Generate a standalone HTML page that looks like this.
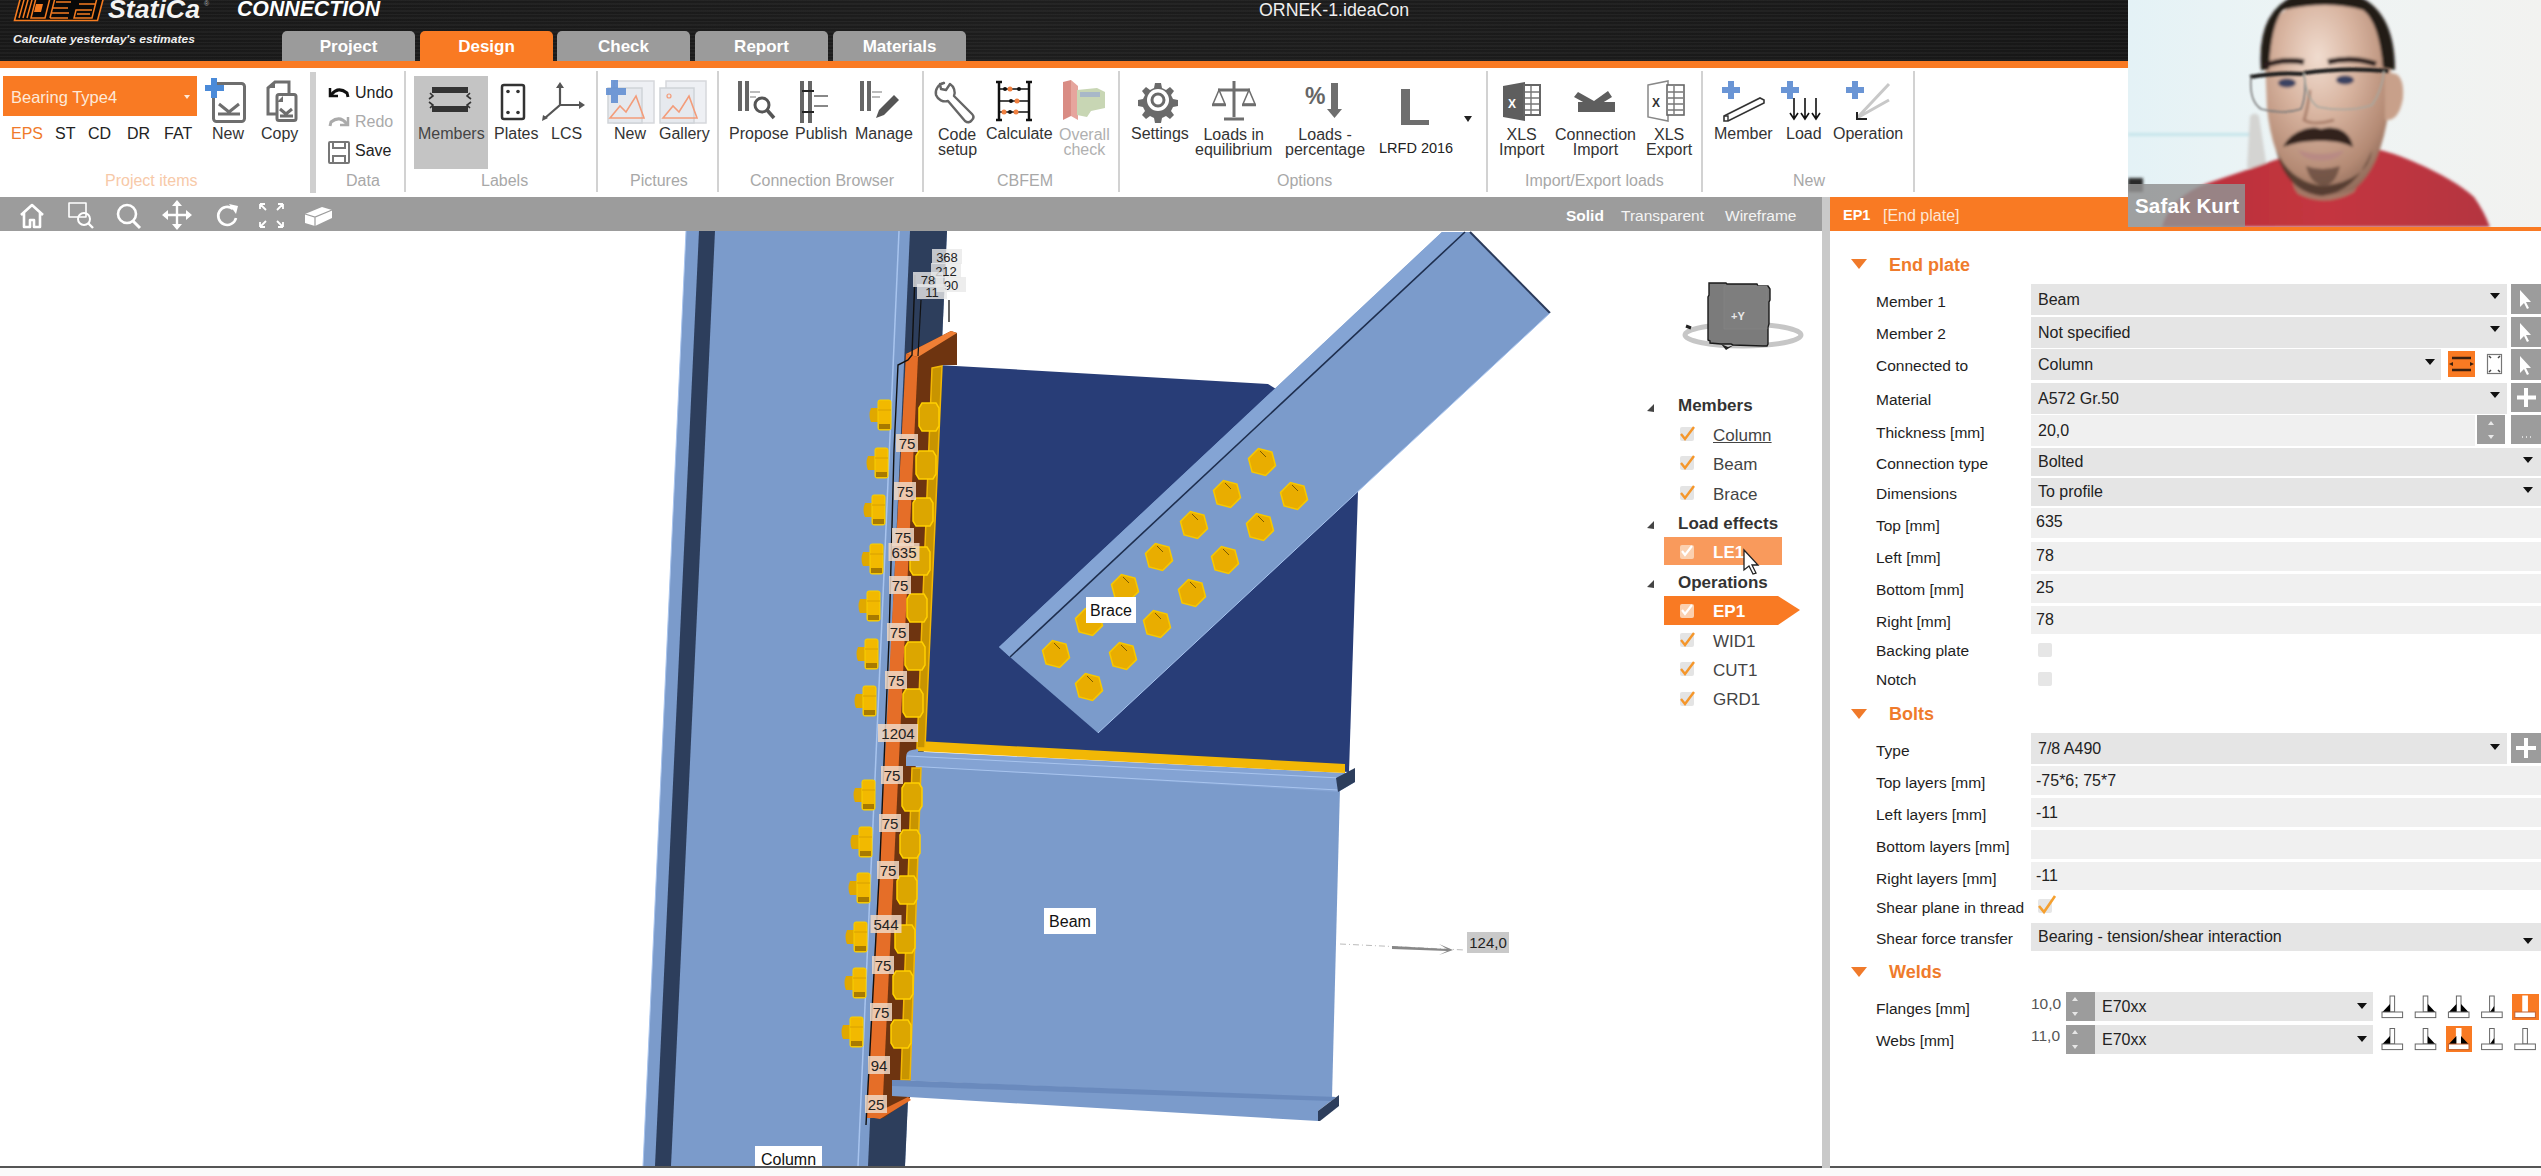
<!DOCTYPE html>
<html><head><meta charset="utf-8">
<style>
*{margin:0;padding:0;box-sizing:border-box}
html,body{width:2541px;height:1176px;overflow:hidden;background:#fff;font-family:"Liberation Sans",sans-serif;position:relative}
.a{position:absolute;white-space:nowrap}
#hdr{left:0;top:0;width:2541px;height:61px;background:repeating-linear-gradient(180deg,rgba(60,60,60,.35) 0px,rgba(0,0,0,0) 1px,rgba(0,0,0,.25) 2px,rgba(0,0,0,0) 3px,rgba(70,70,70,.2) 4px,rgba(0,0,0,.3) 6px,rgba(0,0,0,0) 7px),linear-gradient(90deg,#1c1c1c,#222 40%,#1e1e1e 70%,#141414)}
#ostripe{left:0;top:61px;width:2541px;height:7px;background:#f97a23}
.tab{top:31px;height:30px;width:133px;border-radius:5px 5px 0 0;background:#9b9b9b;color:#fff;font-weight:bold;font-size:17px;text-align:center;line-height:31px}
.tab.on{background:#f97a23}
#ribbon{left:0;top:68px;width:2541px;height:129px;background:#fff}
.sep{top:71px;width:2px;height:121px;background:#d2d2d2}
.lbl{font-size:17px;color:#333;text-align:center}
.grp{font-size:16px;color:#a8a8a8;top:172px}
#tbar{left:0;top:197px;width:1822px;height:34px;background:#9c9c9c}
#vsep{left:1822px;top:197px;width:8px;height:979px;background:#c9c9c9}
#phdr{left:1830px;top:197px;width:711px;height:34px;background:#f97a23}
.pl{font-size:15.5px;color:#1e1e1e;left:1876px;margin-top:1.5px}
.fld{left:2031px;height:31px;background:#e5e5e5;font-size:16px;color:#222;padding-left:7px;line-height:31px}
.sec{font-size:18px;font-weight:bold;color:#ef7b2c;left:1889px}
.tri{width:0;height:0;border-left:8px solid transparent;border-right:8px solid transparent;border-top:10px solid #f07a2a;left:1851px}
</style></head><body>
<div class="a" id="hdr"></div>
<div class="a" id="ostripe"></div>
<div class="a" id="ribbon"></div>
<div class="a tab" style="left:282px">Project</div>
<div class="a tab on" style="left:420px">Design</div>
<div class="a tab" style="left:557px">Check</div>
<div class="a tab" style="left:695px">Report</div>
<div class="a tab" style="left:833px">Materials</div>
<div class="a" style="left:1259px;top:-0.5px;font-size:17.8px;color:#eeeeee">ORNEK-1.ideaCon</div>
<div class="a" id="tbar"></div>
<div class="a" id="vsep"></div>
<div class="a" id="phdr"></div>
<!-- logo -->
<svg class="a" style="left:0;top:0" width="420" height="60">
 <path d="M14.5 20.5 L97.5 20.5 L104 -4 L21 -4 Z" fill="#080808" stroke="#f47b20" stroke-width="1.6"/>
 <g fill="none" stroke="#f47b20" stroke-width="1.5">
  <path d="M19 18 L24.5 -2 M23 18 L28.5 -2"/>
  <path d="M27 18 L32.5 -2 M31 18 L36 -2 L50 -2 L45 18 Z"/>
  <path d="M50 18 L55 -2 L72 -2 M50 18 L68 18 M53 8 L68 8 M56 2 L71 2 M52 13 L69 13"/>
  <path d="M77 -2 L97 -2 L92 18 L74 18 L76 10 L92 10 M79 4 L95 4 M77 14 L90 14"/>
 </g>
 <path d="M36 4 L43 4 L41 12 L34 12 Z" fill="#f47b20"/>
 <text x="108" y="18" font-family="Liberation Sans" font-weight="bold" font-style="italic" font-size="26" fill="#f4f4f4" textLength="92" lengthAdjust="spacingAndGlyphs">StatiCa</text>
 <text x="204" y="6" font-family="Liberation Sans" font-size="7" fill="#aaa">®</text>
 <text x="237" y="16" font-family="Liberation Sans" font-weight="bold" font-style="italic" font-size="22" fill="#fff" textLength="143" lengthAdjust="spacingAndGlyphs">CONNECTION</text>
 <text x="13" y="42.5" font-family="Liberation Sans" font-weight="bold" font-style="italic" font-size="11" fill="#eee" textLength="182" lengthAdjust="spacingAndGlyphs">Calculate yesterday's estimates</text>
</svg>
<!-- dropdown -->
<div class="a" style="left:3px;top:76px;width:194px;height:40px;background:#f97a23"></div>
<div class="a" style="left:11px;top:88px;font-size:16.5px;color:#fde9d8">Bearing Type4</div>
<div class="a" style="left:184px;top:95px;width:0;height:0;border-left:3px solid transparent;border-right:3px solid transparent;border-top:4px solid #fde9d8"></div>
<div class="a" style="left:11px;top:125px;font-size:16px;color:#f07a2a">EPS</div>
<div class="a" style="left:55px;top:125px;font-size:16px;color:#222">ST</div>
<div class="a" style="left:88px;top:125px;font-size:16px;color:#222">CD</div>
<div class="a" style="left:127px;top:125px;font-size:16px;color:#222">DR</div>
<div class="a" style="left:164px;top:125px;font-size:16px;color:#222">FAT</div>
<!-- New / Copy icons -->
<svg class="a" style="left:205px;top:78px" width="95" height="46">
 <rect x="8.5" y="5.5" width="31" height="38" rx="3" fill="none" stroke="#6e6e6e" stroke-width="3"/>
 <path d="M14 26 l10 8 l10 -8 M13 36 h22" stroke="#6e6e6e" stroke-width="3" fill="none"/>
 <path d="M6 0 h6 v7 h7 v6 h-7 v7 h-6 v-7 h-7 v-6 h7z" fill="#4a8ad8"/>
 <path d="M63 22 v-12 l7 -6 h14 v12 M63 22 v14 h9" fill="none" stroke="#6e6e6e" stroke-width="3"/>
 <path d="M63 10 l7 -6 v6z" fill="#6e6e6e"/>
 <rect x="72" y="16.5" width="19" height="26" rx="2" fill="#fff" stroke="#6e6e6e" stroke-width="3"/>
 <path d="M72 24 l6 -6 v6z" fill="#6e6e6e"/>
 <path d="M75 31 l6 5 l6 -5 M75 38 h13" stroke="#6e6e6e" stroke-width="3" fill="none"/>
</svg>
<div class="a" style="left:212px;top:125px;font-size:16px;color:#333">New</div>
<div class="a" style="left:261px;top:125px;font-size:16px;color:#333">Copy</div>
<div class="a grp" style="left:105px;color:#f7c9a8">Project items</div>
<div class="a" style="left:310px;top:72px;width:6px;height:121px;background:#cfcfcf"></div>
<!-- Data -->
<svg class="a" style="left:326px;top:84px" width="26" height="82">
 <path d="M4 4 v8 h8" fill="none" stroke="#111" stroke-width="2.5"/>
 <path d="M5 11 q7 -9 16 -2 l1 4" fill="none" stroke="#111" stroke-width="3"/>
 <path d="M22 33 v8 h-8" fill="none" stroke="#aaa" stroke-width="2.5"/>
 <path d="M21 40 q-7 -9 -16 -2 l-1 4" fill="none" stroke="#aaa" stroke-width="3"/>
 <rect x="3" y="58" width="20" height="21" rx="1" fill="none" stroke="#777" stroke-width="2"/>
 <path d="M7 58 v6 h12 v-6 M7 79 v-7 h12 v7" fill="none" stroke="#777" stroke-width="2"/>
</svg>
<div class="a" style="left:355px;top:84px;font-size:16px;color:#222">Undo</div>
<div class="a" style="left:355px;top:113px;font-size:16px;color:#aaa">Redo</div>
<div class="a" style="left:355px;top:142px;font-size:16px;color:#222">Save</div>
<div class="a grp" style="left:346px">Data</div>
<div class="a sep" style="left:404px"></div>
<!-- Labels -->
<div class="a" style="left:414px;top:76px;width:74px;height:93px;background:#c4c4c4"></div>
<svg class="a" style="left:425px;top:82px" width="160" height="40">
 <rect x="7" y="5" width="36" height="6" fill="#333"/><rect x="7" y="24" width="36" height="6" fill="#333"/>
 <path d="M4 17 l4 -3 l-3 -3 M46 17 l-4 -3 l3 -3 M4 20 l4 3 l-3 3 M46 20 l-4 3 l3 3" stroke="#333" stroke-width="1.6" fill="none"/>
 <rect x="77" y="3" width="22" height="34" rx="2" fill="none" stroke="#333" stroke-width="2.5"/>
 <circle cx="83" cy="9.5" r="1.8" fill="#333"/><circle cx="93" cy="9.5" r="1.8" fill="#333"/><circle cx="83" cy="30.5" r="1.8" fill="#333"/><circle cx="93" cy="30.5" r="1.8" fill="#333"/>
 <path d="M135 3 v20 l-15 13 M135 23 h20" stroke="#555" stroke-width="2.2" fill="none"/>
 <path d="M131 6 l4 -6 l4 6z M154 19 l6 4 l-6 4z M117 39 l1 -6 l5 3z" fill="#555"/>
</svg>
<div class="a" style="left:418px;top:125px;font-size:16px;color:#444">Members</div>
<div class="a" style="left:494px;top:125px;font-size:16px;color:#333">Plates</div>
<div class="a" style="left:551px;top:125px;font-size:16px;color:#333">LCS</div>
<div class="a grp" style="left:481px">Labels</div>
<div class="a sep" style="left:596px"></div>
<!-- Pictures -->
<svg class="a" style="left:606px;top:80px" width="110" height="45">
 <rect x="8" y="1" width="40" height="42" fill="#eef0f4" stroke="#d6d8dc" stroke-width="1.5"/>
 <rect x="2" y="8" width="34" height="35" fill="#e6e9ee" stroke="#cfd3d8" stroke-width="1.5"/>
 <path d="M4 38 l10 -12 l6 6 l10 -16 l8 22z" fill="none" stroke="#f39c7a" stroke-width="1.6"/>
 <path d="M5 0 h7 v8 h8 v7 h-8 v8 h-7 v-8 h-8 v-7 h8z" fill="#5a8ad0" opacity=".85"/>
 <rect x="60" y="1" width="40" height="42" fill="#eef0f4" stroke="#d6d8dc" stroke-width="1.5"/>
 <rect x="54" y="8" width="34" height="35" fill="#e6e9ee" stroke="#cfd3d8" stroke-width="1.5"/>
 <path d="M57 38 l10 -12 l6 6 l10 -16 l8 22z" fill="none" stroke="#f39c7a" stroke-width="1.6"/>
 <circle cx="63" cy="16" r="2" fill="none" stroke="#f39c7a" stroke-width="1.2"/>
</svg>
<div class="a" style="left:614px;top:125px;font-size:16px;color:#333">New</div>
<div class="a" style="left:659px;top:125px;font-size:16px;color:#333">Gallery</div>
<div class="a grp" style="left:630px">Pictures</div>
<div class="a sep" style="left:717px"></div>
<!-- Connection Browser -->
<svg class="a" style="left:733px;top:80px" width="185" height="45">
 <rect x="5" y="1" width="4" height="30" fill="#666"/><rect x="12" y="1" width="4" height="30" fill="#666"/>
 <path d="M17 12 h10 M17 17 h6" stroke="#bbb" stroke-width="2"/>
 <circle cx="29" cy="25" r="7" fill="none" stroke="#555" stroke-width="3"/><path d="M34 30 l7 8" stroke="#555" stroke-width="3.5"/>
 <rect x="67" y="1" width="4" height="42" fill="#666"/><rect x="75" y="1" width="4" height="42" fill="#666"/>
 <path d="M69 11 h12 M69 32 h12" stroke="#222" stroke-width="2"/>
 <path d="M81 16 h14 M81 26 h14" stroke="#888" stroke-width="2.2"/>
 <rect x="127" y="1" width="4" height="30" fill="#666"/><rect x="134" y="1" width="4" height="30" fill="#666"/>
 <path d="M139 12 h10 M139 17 h8" stroke="#bbb" stroke-width="2"/>
 <path d="M143 38 l3 -8 l15 -15 l5 5 l-15 15z" fill="#555"/>
</svg>
<div class="a" style="left:729px;top:125px;font-size:16px;color:#333">Propose</div>
<div class="a" style="left:795px;top:125px;font-size:16px;color:#333">Publish</div>
<div class="a" style="left:855px;top:125px;font-size:16px;color:#333">Manage</div>
<div class="a grp" style="left:750px">Connection Browser</div>
<div class="a sep" style="left:922px"></div>
<!-- CBFEM -->
<svg class="a" style="left:930px;top:80px" width="185" height="45">
 <path d="M14 3 a10 10 0 0 0 -8 12 a10 10 0 0 0 12 6 l17 20 q4 3 7 -1 q3 -3 0 -6 l-18 -18 a10 10 0 0 0 -4 -12 l-4 6 l-5 -1 l-1 -5z" fill="none" stroke="#666" stroke-width="2.4" stroke-linejoin="round"/>
 <path d="M69 2 v38 M99 2 v38 M66 40 h6 M96 40 h6 M66 2 h6 M96 2 h6" stroke="#111" stroke-width="2.5"/>
 <path d="M69 9 h30 M69 21 h30 M69 32 h30" stroke="#111" stroke-width="1.4"/>
 <circle cx="80" cy="9" r="2.5" fill="#f08040"/><circle cx="75" cy="9" r="2" fill="#111"/><circle cx="89" cy="9" r="2" fill="#111"/>
 <circle cx="87" cy="21" r="2.5" fill="#f08040"/><circle cx="81" cy="21" r="2" fill="#111"/>
 <circle cx="74" cy="32" r="2.5" fill="#f08040"/><circle cx="80" cy="32" r="2" fill="#111"/><circle cx="86" cy="32" r="2.5" fill="#f08040"/>
 <path d="M133 2 l8 -2 v36 l-8 4z" fill="#d98c84"/><path d="M141 0 l7 6 v34 l-7 -4z" fill="#e6a59d"/>
 <path d="M147 10 l20 -2 l8 4 v16 l-14 3 l-4 6 l-10 -2z" fill="#c8d6b4"/><path d="M150 12 h20 v5 h-20z" fill="#a8b8c8"/>
</svg>
<div class="a" style="left:938px;top:127px;font-size:16px;color:#333;line-height:15px">Code<br>setup</div>
<div class="a" style="left:986px;top:125px;font-size:16px;color:#333">Calculate</div>
<div class="a" style="left:1059px;top:127px;font-size:16px;color:#b0b0b0;line-height:15px;text-align:center">Overall<br>check</div>
<div class="a grp" style="left:997px">CBFEM</div>
<div class="a sep" style="left:1118px"></div>
<!-- Options -->
<svg class="a" style="left:1130px;top:80px" width="350" height="45">
 <g transform="translate(28,20)"><path d="M-3 -17 h6 l1 5 l4 2 l4 -3 l4 4 l-3 4 l2 4 l5 1 v6 l-5 1 l-2 4 l3 4 l-4 4 l-4 -3 l-4 2 l-1 5 h-6 l-1 -5 l-4 -2 l-4 3 l-4 -4 l3 -4 l-2 -4 l-5 -1 v-6 l5 -1 l2 -4 l-3 -4 l4 -4 l4 3 l4 -2z" fill="#6a6a6a"/><circle r="11" fill="#fff"/><circle r="11" fill="none" stroke="#6a6a6a" stroke-width="0"/><circle r="6" fill="none" stroke="#6a6a6a" stroke-width="3"/></g>
 <path d="M104 1 v36 M94 39 h20 M88 10 h32" stroke="#6e6e6e" stroke-width="3"/>
 <path d="M89 10 l-6 14 h12z M119 10 l-6 14 h12z" fill="none" stroke="#6e6e6e" stroke-width="1.5"/>
 <path d="M82 25 h14 M112 25 h14" stroke="#6e6e6e" stroke-width="2.5"/>
 <text x="175" y="24" font-family="Liberation Sans" font-weight="bold" font-size="23" fill="#666">%</text>
 <rect x="201" y="3" width="7" height="29" fill="#6e6e6e"/><path d="M197 29 h15 l-7.5 9z" fill="#6e6e6e"/>
 <path d="M271 9 h9 v31 h19 v8 h-28z" fill="#6e6e6e"/>
</svg>
<div class="a" style="left:1131px;top:125px;font-size:16px;color:#333">Settings</div>
<div class="a" style="left:1195px;top:127px;font-size:16px;color:#333;line-height:15px;text-align:center">Loads in<br>equilibrium</div>
<div class="a" style="left:1285px;top:127px;font-size:16px;color:#333;line-height:15px;text-align:center">Loads -<br>percentage</div>
<div class="a" style="left:1379px;top:140px;font-size:14.5px;color:#222">LRFD 2016</div>
<div class="a" style="left:1464px;top:116px;width:0;height:0;border-left:4px solid transparent;border-right:4px solid transparent;border-top:6px solid #222"></div>
<div class="a grp" style="left:1277px">Options</div>
<div class="a sep" style="left:1486px"></div>
<!-- Import/Export -->
<svg class="a" style="left:1495px;top:80px" width="420" height="45">
 <path d="M8 6 l22 -4 v39 l-22 -4z" fill="#5e5e5e"/><rect x="29" y="5" width="16" height="30" fill="#fff" stroke="#666" stroke-width="2"/>
 <path d="M30 12 h14 M30 18 h14 M30 24 h14 M30 30 h14 M36 6 v28" stroke="#777" stroke-width="1.4"/>
 <text x="13" y="28" font-family="Liberation Sans" font-weight="bold" font-size="12" fill="#fff">X</text>
 <path d="M83 12 l16 9 l14 -10 l4 6 l-18 11 l-20 -11z" fill="#5e5e5e"/><rect x="83" y="22" width="37" height="10" fill="#5e5e5e"/>
 <path d="M153 5 l20 -4 v40 l-20 -4z" fill="#fff" stroke="#888" stroke-width="1.5"/><rect x="172" y="5" width="17" height="30" fill="#fff" stroke="#666" stroke-width="1.6"/>
 <path d="M173 12 h15 M173 18 h15 M173 24 h15 M173 30 h15 M179 6 v28" stroke="#777" stroke-width="1.4"/>
 <text x="157" y="27" font-family="Liberation Sans" font-weight="bold" font-size="12" fill="#333">X</text>
 <g transform="translate(-10,0)"><path d="M243 1 h6 v6 h6 v6 h-6 v6 h-6 v-6 h-6 v-6 h6z" fill="#5a8ad0" opacity=".9"/>
 <path d="M239 36 l36 -18 l4 2 v3 l-36 18 h-4z" fill="none" stroke="#333" stroke-width="1.6"/><path d="M239 36 h4 v5" stroke="#333" stroke-width="1.4" fill="none"/>
 <path d="M302 1 h6 v6 h6 v6 h-6 v6 h-6 v-6 h-6 v-6 h6z" fill="#5a8ad0" opacity=".9"/>
 <path d="M309 18 v20 M320 18 v20 M331 18 v20 M305 33 l4 6 l4 -6 M316 33 l4 6 l4 -6 M327 33 l4 6 l4 -6" stroke="#111" stroke-width="1.6" fill="none"/>
 <path d="M367 1 h6 v6 h6 v6 h-6 v6 h-6 v-6 h-6 v-6 h6z" fill="#5a8ad0" opacity=".9"/>
 <path d="M372 38 l32 -34 M372 38 l32 -18" stroke="#c8c8c8" stroke-width="3"/><path d="M372 32 v7 h10" stroke="#222" stroke-width="2" fill="none"/>
</g></svg>
<div class="a" style="left:1499px;top:127px;font-size:16px;color:#333;line-height:15px;text-align:center">XLS<br>Import</div>
<div class="a" style="left:1555px;top:127px;font-size:16px;color:#333;line-height:15px;text-align:center">Connection<br>Import</div>
<div class="a" style="left:1646px;top:127px;font-size:16px;color:#333;line-height:15px;text-align:center">XLS<br>Export</div>
<div class="a grp" style="left:1525px">Import/Export loads</div>
<div class="a sep" style="left:1701px"></div>
<div class="a" style="left:1714px;top:125px;font-size:16px;color:#333">Member</div>
<div class="a" style="left:1786px;top:125px;font-size:16px;color:#333">Load</div>
<div class="a" style="left:1833px;top:125px;font-size:16px;color:#333">Operation</div>
<div class="a grp" style="left:1793px">New</div>
<div class="a sep" style="left:1913px"></div>
<svg class="a" style="left:0;top:198px" width="345" height="34">
 <g fill="none" stroke="#fff" stroke-width="2.6" stroke-linejoin="round">
  <path d="M21 17 l11 -10 l11 10 M24 15 v14 h6 v-7 h4 v7 h6 v-14"/>
  <rect x="69" y="5" width="17" height="14" stroke-width="1.6"/>
  <circle cx="84" cy="21" r="6" stroke-width="2"/><path d="M88 25 l5 5" stroke-width="2.4"/>
  <circle cx="127" cy="16" r="9"/><path d="M133 23 l7 7" stroke-width="3"/>
  <path d="M177 4 v26 M164 17 h26" stroke-width="2.4"/>
 </g>
 <g fill="#fff">
  <path d="M177 2 l-5 6 h10z M177 32 l-5 -6 h10z M162 17 l6 -5 v10z M192 17 l-6 -5 v10z"/>
 </g>
 <path d="M233 11 a9 9 0 1 0 3 9" fill="none" stroke="#fff" stroke-width="2.6"/><path d="M229 6 l9 2 l-2 8z" fill="#fff"/>
 <g stroke="#fff" stroke-width="1.8" fill="none">
  <path d="M260 6 l6 6 M260 6 v5 M260 6 h5 M283 6 l-6 6 M283 6 v5 M283 6 h-5 M260 29 l6 -6 M260 29 v-5 M260 29 h5 M283 29 l-6 -6 M283 29 v-5 M283 29 h-5"/>
 </g>
 <path d="M305 16 l17 -7 l10 3 v8 l-17 8 l-10 -3z" fill="#fff"/><path d="M305 16 l10 3 l17 -7 M315 19 v9" stroke="#9c9c9c" stroke-width="1.2" fill="none"/>
</svg>
<div class="a" style="left:1566px;top:206.5px;font-size:15.5px;color:#fff;font-weight:bold">Solid</div>
<div class="a" style="left:1621px;top:206.5px;font-size:15.5px;color:#f4f4f4">Transparent</div>
<div class="a" style="left:1725px;top:206.5px;font-size:15.5px;color:#f4f4f4">Wireframe</div>
<div class="a" style="left:1843px;top:207px;font-size:14.5px;color:#fff;font-weight:bold">EP1</div>
<div class="a" style="left:1883px;top:207px;font-size:16px;color:#fde6d4">[End plate]</div>
<!-- bottom line -->
<div class="a" style="left:0;top:1166px;width:1822px;height:2px;background:#555"></div>
<div class="a" style="left:1830px;top:1166px;width:711px;height:2px;background:#555"></div>
<div class="a" style="left:0;top:1168px;width:2541px;height:8px;background:#fafafa"></div>
<svg class="a" style="left:0;top:231px" width="1822" height="935" viewBox="0 231 1822 935">
<polygon points="686,231 947,231 905,1166 643,1166" fill="#7b9bcb"/>
<polygon points="699,231 715,231 671,1166 655,1166" fill="#2d3e5c"/>
<polygon points="910,231 947,231 905,1166 868,1166" fill="#2d3e5c"/>
<line x1="899" y1="231" x2="858" y2="1166" stroke="#a8c4ee" stroke-width="1.5"/>
<line x1="686" y1="231" x2="643" y2="1166" stroke="#a8c4ee" stroke-width="1"/>
<polygon points="938,365 1268,384 1358,440 1358,492 1349,772 925,748" fill="#283d77"/>
<polygon points="912,760 1340,788 1332,1098 893,1080" fill="#7b9bcb"/>
<polygon points="905,751 1345,773 1355,772 1355,782 1338,792 907,766" fill="#84a3d3"/><line x1="907" y1="756" x2="1340" y2="778" stroke="#a8c4ee" stroke-width="1"/><line x1="907" y1="766" x2="1338" y2="790" stroke="#a8c4ee" stroke-width="1"/>
<polygon points="1336,778 1355,768 1355,782 1338,792" fill="#2d3e5c"/>
<polygon points="918,741 1345,764 1345,773 916,751" fill="#f2b705"/>
<polygon points="999,647 1442,232 1470,232 1550,313 1098,733 1010,657" fill="#7b9bcb"/>
<polygon points="999,647 1442,232 1465,232 1010,657" fill="#84a4d4"/>
<line x1="1010" y1="657" x2="1465" y2="232" stroke="#1e2e4e" stroke-width="1.6"/>
<line x1="1470" y1="232" x2="1550" y2="313" stroke="#2a3a5a" stroke-width="2"/>
<line x1="1098" y1="733" x2="1550" y2="313" stroke="#a8c4ee" stroke-width="1"/>
<polygon points="1275.5,465.6 1265.6,475.5 1252.1,471.9 1248.5,458.4 1258.4,448.5 1271.9,452.1" fill="#e9ad00" stroke="#f7c800" stroke-width="1.5"/>
<path d="M1260 451 l6 6" stroke="#7a5a00" stroke-width="1"/>
<polygon points="1240.5,497.6 1230.6,507.5 1217.1,503.9 1213.5,490.4 1223.4,480.5 1236.9,484.1" fill="#e9ad00" stroke="#f7c800" stroke-width="1.5"/>
<path d="M1225 483 l6 6" stroke="#7a5a00" stroke-width="1"/>
<polygon points="1307.5,499.6 1297.6,509.5 1284.1,505.9 1280.5,492.4 1290.4,482.5 1303.9,486.1" fill="#e9ad00" stroke="#f7c800" stroke-width="1.5"/>
<path d="M1292 485 l6 6" stroke="#7a5a00" stroke-width="1"/>
<polygon points="1207.5,528.6 1197.6,538.5 1184.1,534.9 1180.5,521.4 1190.4,511.5 1203.9,515.1" fill="#e9ad00" stroke="#f7c800" stroke-width="1.5"/>
<path d="M1192 514 l6 6" stroke="#7a5a00" stroke-width="1"/>
<polygon points="1273.5,530.6 1263.6,540.5 1250.1,536.9 1246.5,523.4 1256.4,513.5 1269.9,517.1" fill="#e9ad00" stroke="#f7c800" stroke-width="1.5"/>
<path d="M1258 516 l6 6" stroke="#7a5a00" stroke-width="1"/>
<polygon points="1172.5,560.6 1162.6,570.5 1149.1,566.9 1145.5,553.4 1155.4,543.5 1168.9,547.1" fill="#e9ad00" stroke="#f7c800" stroke-width="1.5"/>
<path d="M1157 546 l6 6" stroke="#7a5a00" stroke-width="1"/>
<polygon points="1238.5,563.6 1228.6,573.5 1215.1,569.9 1211.5,556.4 1221.4,546.5 1234.9,550.1" fill="#e9ad00" stroke="#f7c800" stroke-width="1.5"/>
<path d="M1223 549 l6 6" stroke="#7a5a00" stroke-width="1"/>
<polygon points="1138.5,591.6 1128.6,601.5 1115.1,597.9 1111.5,584.4 1121.4,574.5 1134.9,578.1" fill="#e9ad00" stroke="#f7c800" stroke-width="1.5"/>
<path d="M1123 577 l6 6" stroke="#7a5a00" stroke-width="1"/>
<polygon points="1205.5,596.6 1195.6,606.5 1182.1,602.9 1178.5,589.4 1188.4,579.5 1201.9,583.1" fill="#e9ad00" stroke="#f7c800" stroke-width="1.5"/>
<path d="M1190 582 l6 6" stroke="#7a5a00" stroke-width="1"/>
<polygon points="1102.5,625.6 1092.6,635.5 1079.1,631.9 1075.5,618.4 1085.4,608.5 1098.9,612.1" fill="#e9ad00" stroke="#f7c800" stroke-width="1.5"/>
<path d="M1087 611 l6 6" stroke="#7a5a00" stroke-width="1"/>
<polygon points="1170.5,627.6 1160.6,637.5 1147.1,633.9 1143.5,620.4 1153.4,610.5 1166.9,614.1" fill="#e9ad00" stroke="#f7c800" stroke-width="1.5"/>
<path d="M1155 613 l6 6" stroke="#7a5a00" stroke-width="1"/>
<polygon points="1069.5,657.6 1059.6,667.5 1046.1,663.9 1042.5,650.4 1052.4,640.5 1065.9,644.1" fill="#e9ad00" stroke="#f7c800" stroke-width="1.5"/>
<path d="M1054 643 l6 6" stroke="#7a5a00" stroke-width="1"/>
<polygon points="1136.5,659.6 1126.6,669.5 1113.1,665.9 1109.5,652.4 1119.4,642.5 1132.9,646.1" fill="#e9ad00" stroke="#f7c800" stroke-width="1.5"/>
<path d="M1121 645 l6 6" stroke="#7a5a00" stroke-width="1"/>
<polygon points="1102.5,690.6 1092.6,700.5 1079.1,696.9 1075.5,683.4 1085.4,673.5 1098.9,677.1" fill="#e9ad00" stroke="#f7c800" stroke-width="1.5"/>
<path d="M1087 676 l6 6" stroke="#7a5a00" stroke-width="1"/>
<polygon points="906,354 951,331 957,333 957,365 942,365 925,748 916,748 910,1098 884,1118 868,1118" fill="#6e3410"/>
<polygon points="906,354 918,357 882,1118 866,1118" fill="#e56e28"/>
<polygon points="906,354 951,331 957,333 918,357" fill="#f07f35"/>
<polygon points="868,1117 908,1097 911,1100 880,1119" fill="#e56e28"/>
<polygon points="932,368 942,366 925,748 917,748" fill="#c89400" stroke="#f2b705" stroke-width="1.5"/>
<polygon points="912,768 921,768 910,1080 901,1080" fill="#c89400" stroke="#f2b705" stroke-width="1.5"/>
<polygon points="892,1080 1336,1097 1318,1111 1318,1121 892,1096" fill="#7b9bcb"/>
<polygon points="892,1080 1336,1097 1331,1101 892,1086" fill="#6a8abd"/>
<polygon points="1318,1111 1339,1095 1339,1106 1320,1121 1318,1121" fill="#2d3e5c"/>
<path d="M906 766 V757 q0 -6 6 -7 L918 749 V766z" fill="#84a3d3"/>
<line x1="907" y1="756" x2="918" y2="756.5" stroke="#a8c4ee" stroke-width="1"/>
<polyline points="915,275 912,355 908,360 898,365 894,450 889,640 880,860 866,1125" fill="none" stroke="#111" stroke-width="1.4"/>
<polyline points="921,300 918,356" fill="none" stroke="#111" stroke-width="1.2"/>
<polyline points="949,300 949,322" fill="none" stroke="#111" stroke-width="1.3"/>
<path d="M871 408 q-3 7 0 14 h8 v-14z" fill="#e0a800"/>
<rect x="878" y="400" width="13" height="30" rx="2" fill="#f2b900" stroke="#f8d000" stroke-width="1"/>
<rect x="879" y="424" width="11" height="5" fill="#a87a00"/>
<line x1="878" y1="410" x2="891" y2="410" stroke="#d8a000" stroke-width="1"/>
<path d="M868 456 q-3 7 0 14 h8 v-14z" fill="#e0a800"/>
<rect x="875" y="448" width="13" height="30" rx="2" fill="#f2b900" stroke="#f8d000" stroke-width="1"/>
<rect x="876" y="472" width="11" height="5" fill="#a87a00"/>
<line x1="875" y1="458" x2="888" y2="458" stroke="#d8a000" stroke-width="1"/>
<path d="M865 503 q-3 7 0 14 h8 v-14z" fill="#e0a800"/>
<rect x="872" y="495" width="13" height="30" rx="2" fill="#f2b900" stroke="#f8d000" stroke-width="1"/>
<rect x="873" y="519" width="11" height="5" fill="#a87a00"/>
<line x1="872" y1="505" x2="885" y2="505" stroke="#d8a000" stroke-width="1"/>
<path d="M863 552 q-3 7 0 14 h8 v-14z" fill="#e0a800"/>
<rect x="870" y="544" width="13" height="30" rx="2" fill="#f2b900" stroke="#f8d000" stroke-width="1"/>
<rect x="871" y="568" width="11" height="5" fill="#a87a00"/>
<line x1="870" y1="554" x2="883" y2="554" stroke="#d8a000" stroke-width="1"/>
<path d="M860 599 q-3 7 0 14 h8 v-14z" fill="#e0a800"/>
<rect x="867" y="591" width="13" height="30" rx="2" fill="#f2b900" stroke="#f8d000" stroke-width="1"/>
<rect x="868" y="615" width="11" height="5" fill="#a87a00"/>
<line x1="867" y1="601" x2="880" y2="601" stroke="#d8a000" stroke-width="1"/>
<path d="M858 647 q-3 7 0 14 h8 v-14z" fill="#e0a800"/>
<rect x="865" y="639" width="13" height="30" rx="2" fill="#f2b900" stroke="#f8d000" stroke-width="1"/>
<rect x="866" y="663" width="11" height="5" fill="#a87a00"/>
<line x1="865" y1="649" x2="878" y2="649" stroke="#d8a000" stroke-width="1"/>
<path d="M856 694 q-3 7 0 14 h8 v-14z" fill="#e0a800"/>
<rect x="863" y="686" width="13" height="30" rx="2" fill="#f2b900" stroke="#f8d000" stroke-width="1"/>
<rect x="864" y="710" width="11" height="5" fill="#a87a00"/>
<line x1="863" y1="696" x2="876" y2="696" stroke="#d8a000" stroke-width="1"/>
<path d="M855 788 q-3 7 0 14 h8 v-14z" fill="#e0a800"/>
<rect x="862" y="780" width="13" height="30" rx="2" fill="#f2b900" stroke="#f8d000" stroke-width="1"/>
<rect x="863" y="804" width="11" height="5" fill="#a87a00"/>
<line x1="862" y1="790" x2="875" y2="790" stroke="#d8a000" stroke-width="1"/>
<path d="M852 835 q-3 7 0 14 h8 v-14z" fill="#e0a800"/>
<rect x="859" y="827" width="13" height="30" rx="2" fill="#f2b900" stroke="#f8d000" stroke-width="1"/>
<rect x="860" y="851" width="11" height="5" fill="#a87a00"/>
<line x1="859" y1="837" x2="872" y2="837" stroke="#d8a000" stroke-width="1"/>
<path d="M850 881 q-3 7 0 14 h8 v-14z" fill="#e0a800"/>
<rect x="857" y="873" width="13" height="30" rx="2" fill="#f2b900" stroke="#f8d000" stroke-width="1"/>
<rect x="858" y="897" width="11" height="5" fill="#a87a00"/>
<line x1="857" y1="883" x2="870" y2="883" stroke="#d8a000" stroke-width="1"/>
<path d="M847 930 q-3 7 0 14 h8 v-14z" fill="#e0a800"/>
<rect x="854" y="922" width="13" height="30" rx="2" fill="#f2b900" stroke="#f8d000" stroke-width="1"/>
<rect x="855" y="946" width="11" height="5" fill="#a87a00"/>
<line x1="854" y1="932" x2="867" y2="932" stroke="#d8a000" stroke-width="1"/>
<path d="M846 976 q-3 7 0 14 h8 v-14z" fill="#e0a800"/>
<rect x="853" y="968" width="13" height="30" rx="2" fill="#f2b900" stroke="#f8d000" stroke-width="1"/>
<rect x="854" y="992" width="11" height="5" fill="#a87a00"/>
<line x1="853" y1="978" x2="866" y2="978" stroke="#d8a000" stroke-width="1"/>
<path d="M843 1025 q-3 7 0 14 h8 v-14z" fill="#e0a800"/>
<rect x="850" y="1017" width="13" height="30" rx="2" fill="#f2b900" stroke="#f8d000" stroke-width="1"/>
<rect x="851" y="1041" width="11" height="5" fill="#a87a00"/>
<line x1="850" y1="1027" x2="863" y2="1027" stroke="#d8a000" stroke-width="1"/>
<path d="M922 403 h14 l3 5 v18 l-3 5 h-14 l-3 -5 v-18z" fill="#dca600" stroke="#ffd000" stroke-width="1.5"/>
<path d="M919 451 h14 l3 5 v18 l-3 5 h-14 l-3 -5 v-18z" fill="#dca600" stroke="#ffd000" stroke-width="1.5"/>
<path d="M916 498 h14 l3 5 v18 l-3 5 h-14 l-3 -5 v-18z" fill="#dca600" stroke="#ffd000" stroke-width="1.5"/>
<path d="M913 547 h14 l3 5 v18 l-3 5 h-14 l-3 -5 v-18z" fill="#dca600" stroke="#ffd000" stroke-width="1.5"/>
<path d="M910 594 h14 l3 5 v18 l-3 5 h-14 l-3 -5 v-18z" fill="#dca600" stroke="#ffd000" stroke-width="1.5"/>
<path d="M908 642 h14 l3 5 v18 l-3 5 h-14 l-3 -5 v-18z" fill="#dca600" stroke="#ffd000" stroke-width="1.5"/>
<path d="M906 689 h14 l3 5 v18 l-3 5 h-14 l-3 -5 v-18z" fill="#dca600" stroke="#ffd000" stroke-width="1.5"/>
<path d="M905 783 h14 l3 5 v18 l-3 5 h-14 l-3 -5 v-18z" fill="#dca600" stroke="#ffd000" stroke-width="1.5"/>
<path d="M903 830 h14 l3 5 v18 l-3 5 h-14 l-3 -5 v-18z" fill="#dca600" stroke="#ffd000" stroke-width="1.5"/>
<path d="M900 876 h14 l3 5 v18 l-3 5 h-14 l-3 -5 v-18z" fill="#dca600" stroke="#ffd000" stroke-width="1.5"/>
<path d="M898 925 h14 l3 5 v18 l-3 5 h-14 l-3 -5 v-18z" fill="#dca600" stroke="#ffd000" stroke-width="1.5"/>
<path d="M896 971 h14 l3 5 v18 l-3 5 h-14 l-3 -5 v-18z" fill="#dca600" stroke="#ffd000" stroke-width="1.5"/>
<path d="M894 1020 h14 l3 5 v18 l-3 5 h-14 l-3 -5 v-18z" fill="#dca600" stroke="#ffd000" stroke-width="1.5"/>
<rect x="896.0" y="434" width="22" height="18" fill="#f0d8c4" opacity=".85"/>
<text x="907" y="449" font-family="Liberation Sans" font-size="15" fill="#222" text-anchor="middle">75</text>
<rect x="894.0" y="482" width="22" height="18" fill="#f0d8c4" opacity=".85"/>
<text x="905" y="497" font-family="Liberation Sans" font-size="15" fill="#222" text-anchor="middle">75</text>
<rect x="892.0" y="528" width="22" height="18" fill="#f0d8c4" opacity=".85"/>
<text x="903" y="543" font-family="Liberation Sans" font-size="15" fill="#222" text-anchor="middle">75</text>
<rect x="888.5" y="543" width="31" height="18" fill="#f0d8c4" opacity=".85"/>
<text x="904" y="558" font-family="Liberation Sans" font-size="15" fill="#222" text-anchor="middle">635</text>
<rect x="889.0" y="576" width="22" height="18" fill="#f0d8c4" opacity=".85"/>
<text x="900" y="591" font-family="Liberation Sans" font-size="15" fill="#222" text-anchor="middle">75</text>
<rect x="887.0" y="623" width="22" height="18" fill="#f0d8c4" opacity=".85"/>
<text x="898" y="638" font-family="Liberation Sans" font-size="15" fill="#222" text-anchor="middle">75</text>
<rect x="885.0" y="671" width="22" height="18" fill="#f0d8c4" opacity=".85"/>
<text x="896" y="686" font-family="Liberation Sans" font-size="15" fill="#222" text-anchor="middle">75</text>
<rect x="878.0" y="724" width="40" height="18" fill="#f0d8c4" opacity=".85"/>
<text x="898" y="739" font-family="Liberation Sans" font-size="15" fill="#222" text-anchor="middle">1204</text>
<rect x="881.0" y="766" width="22" height="18" fill="#f0d8c4" opacity=".85"/>
<text x="892" y="781" font-family="Liberation Sans" font-size="15" fill="#222" text-anchor="middle">75</text>
<rect x="879.0" y="814" width="22" height="18" fill="#f0d8c4" opacity=".85"/>
<text x="890" y="829" font-family="Liberation Sans" font-size="15" fill="#222" text-anchor="middle">75</text>
<rect x="877.0" y="861" width="22" height="18" fill="#f0d8c4" opacity=".85"/>
<text x="888" y="876" font-family="Liberation Sans" font-size="15" fill="#222" text-anchor="middle">75</text>
<rect x="870.5" y="915" width="31" height="18" fill="#f0d8c4" opacity=".85"/>
<text x="886" y="930" font-family="Liberation Sans" font-size="15" fill="#222" text-anchor="middle">544</text>
<rect x="872.0" y="956" width="22" height="18" fill="#f0d8c4" opacity=".85"/>
<text x="883" y="971" font-family="Liberation Sans" font-size="15" fill="#222" text-anchor="middle">75</text>
<rect x="870.0" y="1003" width="22" height="18" fill="#f0d8c4" opacity=".85"/>
<text x="881" y="1018" font-family="Liberation Sans" font-size="15" fill="#222" text-anchor="middle">75</text>
<rect x="868.0" y="1056" width="22" height="18" fill="#f0d8c4" opacity=".85"/>
<text x="879" y="1071" font-family="Liberation Sans" font-size="15" fill="#222" text-anchor="middle">94</text>
<rect x="865.0" y="1095" width="22" height="18" fill="#f0d8c4" opacity=".85"/>
<text x="876" y="1110" font-family="Liberation Sans" font-size="15" fill="#222" text-anchor="middle">25</text>
<rect x="932" y="249" width="30" height="15" fill="#e8e8e8" opacity=".8"/>
<text x="947" y="262" font-family="Liberation Sans" font-size="13" fill="#222" text-anchor="middle">368</text>
<rect x="931" y="263" width="30" height="15" fill="#e8e8e8" opacity=".8"/>
<text x="946" y="276" font-family="Liberation Sans" font-size="13" fill="#222" text-anchor="middle">212</text>
<rect x="913" y="272" width="30" height="15" fill="#e8e8e8" opacity=".8"/>
<text x="928" y="285" font-family="Liberation Sans" font-size="13" fill="#222" text-anchor="middle">78</text>
<rect x="936" y="277" width="30" height="15" fill="#e8e8e8" opacity=".8"/>
<text x="951" y="290" font-family="Liberation Sans" font-size="13" fill="#222" text-anchor="middle">90</text>
<rect x="917" y="284" width="30" height="15" fill="#e8e8e8" opacity=".8"/>
<text x="932" y="297" font-family="Liberation Sans" font-size="13" fill="#222" text-anchor="middle">11</text>
<rect x="1086" y="597" width="50" height="26" fill="#fff"/>
<text x="1111.0" y="616" font-family="Liberation Sans" font-size="16" fill="#111" text-anchor="middle">Brace</text>
<rect x="1044" y="908" width="52" height="26" fill="#fff"/>
<text x="1070.0" y="927" font-family="Liberation Sans" font-size="16" fill="#111" text-anchor="middle">Beam</text>
<rect x="755" y="1146" width="67" height="26" fill="#fff"/>
<text x="788.5" y="1165" font-family="Liberation Sans" font-size="16" fill="#111" text-anchor="middle">Column</text>
<line x1="1340" y1="944" x2="1465" y2="950" stroke="#bbb" stroke-width="1" stroke-dasharray="6 3 1 3"/>
<path d="M1392 946 l55 3 l-8 -5 l14 6 l-14 5 l8 -4 l-55 -2z" fill="#888"/>
<rect x="1467" y="932" width="42" height="21" fill="#c9c9c9"/>
<text x="1488" y="948" font-family="Liberation Sans" font-size="15" fill="#222" text-anchor="middle">124,0</text>
</svg><svg class="a" style="left:1640px;top:270px" width="180" height="450">
 <ellipse cx="103" cy="65" rx="58" ry="11" fill="none" stroke="#c6c6c6" stroke-width="5"/>
 <path d="M69 13 l17 0 l1 1 l30 0 l1 2 l10 0 l2 3 v11 l-1 2 v22 l-1 3 v17 l-1 2 l-4 0 l-30 -1 l-2 -1 l-10 0 l-11 -1 v-2 l-2 -1 v-43 l1 -2z" fill="#7b7b7b" stroke="#1a1a1a" stroke-width="1.4"/>
 <path d="M84 16 h43 v43 h-43z" fill="#7e7e7e" stroke="#888" stroke-width=".6"/>
 <text x="91" y="50" font-family="Liberation Sans" font-weight="bold" font-size="11" fill="#e8e8e8">+Y</text>
 <path d="M46 56 l5 2" stroke="#222" stroke-width="3"/>
 <path d="M81 74 l7 3 l6 -2 l-8 5z" fill="#222"/>
 <path d="M7 141 l7 -7 v8z M7 258 l7 -7 v8z M7 317 l7 -7 v8z" fill="#444"/>
</svg>
<div class="a" style="left:1678px;top:396px;font-size:17px;font-weight:bold;color:#333">Members</div>
<div class="a" style="left:1713px;top:426px;font-size:17px;color:#444;text-decoration:underline">Column</div>
<div class="a" style="left:1713px;top:455px;font-size:17px;color:#444">Beam</div>
<div class="a" style="left:1713px;top:485px;font-size:17px;color:#444">Brace</div>
<div class="a" style="left:1678px;top:514px;font-size:17px;font-weight:bold;color:#333">Load effects</div>
<div class="a" style="left:1664px;top:537px;width:118px;height:28px;background:#f99a5c"></div>
<div class="a" style="left:1713px;top:543px;font-size:17px;font-weight:bold;color:#fff">LE1</div>
<div class="a" style="left:1678px;top:573px;font-size:17px;font-weight:bold;color:#333">Operations</div>
<svg class="a" style="left:1664px;top:596px" width="137" height="29"><path d="M0 0 h114 l22 14 l-22 15 h-114z" fill="#f97a23"/></svg>
<div class="a" style="left:1713px;top:602px;font-size:17px;font-weight:bold;color:#fff">EP1</div>
<div class="a" style="left:1713px;top:632px;font-size:17px;color:#444">WID1</div>
<div class="a" style="left:1713px;top:661px;font-size:17px;color:#444">CUT1</div>
<div class="a" style="left:1713px;top:690px;font-size:17px;color:#444">GRD1</div>
<svg class="a" style="left:1676px;top:420px" width="120" height="300">
 <g fill="#e4e4e4"><rect x="4" y="7" width="14" height="14" rx="2"/><rect x="4" y="36" width="14" height="14" rx="2"/><rect x="4" y="66" width="14" height="14" rx="2"/><rect x="4" y="125" width="14" height="14" rx="2" fill="#fbd0b0"/><rect x="4" y="184" width="14" height="14" rx="2" fill="#fbd0b0"/><rect x="4" y="213" width="14" height="14" rx="2"/><rect x="4" y="242" width="14" height="14" rx="2"/><rect x="4" y="272" width="14" height="14" rx="2"/></g>
 <g fill="none" stroke="#f5962a" stroke-width="2.4"><path d="M5 14 l4 5 l9 -12 M5 43 l4 5 l9 -12 M5 73 l4 5 l9 -12 M5 220 l4 5 l9 -12 M5 249 l4 5 l9 -12 M5 279 l4 5 l9 -12"/></g>
 <g fill="none" stroke="#fff" stroke-width="2.2"><path d="M6 131 l3 4 l7 -9 M6 190 l3 4 l7 -9"/></g>
 <path d="M68 130 v20 l5 -4 l4 8 l3 -1 l-4 -8 h6z" fill="#fff" stroke="#222" stroke-width="1.3"/>
</svg>
<div class="a tri" style="top:259px"></div>
<div class="a sec" style="top:255px">End plate</div>
<div class="a pl" style="top:291px">Member 1</div>
<div class="a pl" style="top:323px">Member 2</div>
<div class="a pl" style="top:355px">Connected to</div>
<div class="a pl" style="top:389px">Material</div>
<div class="a pl" style="top:422px">Thickness [mm]</div>
<div class="a pl" style="top:453px">Connection type</div>
<div class="a pl" style="top:483px">Dimensions</div>
<div class="a pl" style="top:515px">Top [mm]</div>
<div class="a pl" style="top:547px">Left [mm]</div>
<div class="a pl" style="top:579px">Bottom [mm]</div>
<div class="a pl" style="top:611px">Right [mm]</div>
<div class="a pl" style="top:640px">Backing plate</div>
<div class="a pl" style="top:669px">Notch</div>
<div class="a fld" style="top:284px;width:476px">Beam</div>
<div class="a fld" style="top:317px;width:476px">Not specified</div>
<div class="a fld" style="top:349px;width:410px">Column</div>
<div class="a fld" style="top:383px;width:476px">A572 Gr.50</div>
<div class="a fld" style="top:415px;width:444px;background:#f0f0f0">20,0</div>
<div class="a fld" style="top:448px;width:510px;height:28px;line-height:28px">Bolted</div>
<div class="a fld" style="top:478px;width:510px;height:28px;line-height:28px">To profile</div>
<div class="a fld" style="top:508px;width:510px;height:30px;line-height:28px;background:#f0f0f0;padding-left:5px">635</div>
<div class="a fld" style="top:542px;width:510px;height:29px;line-height:28px;background:#f0f0f0;padding-left:5px">78</div>
<div class="a fld" style="top:574px;width:510px;height:29px;line-height:28px;background:#f0f0f0;padding-left:5px">25</div>
<div class="a fld" style="top:606px;width:510px;height:28px;line-height:28px;background:#f0f0f0;padding-left:5px">78</div>
<div class="a" style="left:2038px;top:643px;width:14px;height:14px;background:#e6e6e6;border-radius:2px"></div>
<div class="a" style="left:2038px;top:672px;width:14px;height:14px;background:#e6e6e6;border-radius:2px"></div>
<!-- dropdown arrows -->
<svg class="a" style="left:2420px;top:284px" width="121" height="400">
 <path d="M70 9 h10 l-5 6z M70 42 h10 l-5 6z M5 75 h10 l-5 6z M70 108 h10 l-5 6z M103 173 h10 l-5 6z M103 203 h10 l-5 6z" fill="#111"/>
 <rect x="91" y="0" width="30" height="30" fill="#9c9c9c"/><rect x="91" y="33" width="30" height="30" fill="#9c9c9c"/><rect x="91" y="65" width="30" height="31" fill="#9c9c9c"/><rect x="91" y="99" width="30" height="29" fill="#9c9c9c"/><rect x="91" y="131" width="30" height="29" fill="#9c9c9c"/>
 <rect x="57" y="131" width="28" height="29" fill="#9c9c9c"/>
 <path d="M71 137 l-3 4 h6z M71 155 l-3 -4 h6z" fill="#e8e8e8"/>
 <path d="M102 153 h1 M106 153 h1 M110 153 h1" stroke="#eee" stroke-width="1.5"/>
 <path d="M100 6 v17 l4 -4 l3 6 l2 -1 l-3 -6 h5z M100 39 v17 l4 -4 l3 6 l2 -1 l-3 -6 h5z M100 72 v17 l4 -4 l3 6 l2 -1 l-3 -6 h5z" fill="#fff"/>
 <path d="M106 104 v19 M97 113.5 h19" stroke="#fff" stroke-width="4"/>
 <rect x="28" y="67" width="27" height="26" fill="#f97a23"/>
 <path d="M32 74 h19 M32 86 h19" stroke="#3a2010" stroke-width="2.5"/><path d="M29 80 l4 -2 v4z M54 80 l-4 -2 v4z" fill="#3a2010"/>
 <rect x="67.5" y="70.5" width="14" height="19" fill="none" stroke="#777" stroke-width="1.2"/><path d="M69 72 l2 2 M80 72 l-2 2 M69 88 l2 -2 M80 88 l-2 -2" stroke="#444" stroke-width="1.5"/>
</svg>
<!-- Bolts -->
<div class="a tri" style="top:709px"></div>
<div class="a sec" style="top:704px">Bolts</div>
<div class="a pl" style="top:740px">Type</div>
<div class="a pl" style="top:772px">Top layers [mm]</div>
<div class="a pl" style="top:804px">Left layers [mm]</div>
<div class="a pl" style="top:836px">Bottom layers [mm]</div>
<div class="a pl" style="top:868px">Right layers [mm]</div>
<div class="a pl" style="top:897px">Shear plane in thread</div>
<div class="a pl" style="top:928px">Shear force transfer</div>
<div class="a fld" style="top:733px;width:476px">7/8 A490</div>
<div class="a fld" style="top:766px;width:510px;height:29px;background:#f0f0f0;padding-left:5px;line-height:29px">-75*6; 75*7</div>
<div class="a fld" style="top:798px;width:510px;height:29px;background:#f0f0f0;padding-left:5px;line-height:29px">-11</div>
<div class="a fld" style="top:830px;width:510px;height:29px;background:#f0f0f0"></div>
<div class="a fld" style="top:862px;width:510px;height:28px;background:#f0f0f0;padding-left:5px;line-height:28px">-11</div>
<div class="a fld" style="top:923px;width:510px;height:28px;line-height:28px">Bearing - tension/shear interaction</div>
<div class="a" style="left:2038px;top:899px;width:14px;height:14px;background:#e6e6e6;border-radius:2px"></div>
<svg class="a" style="left:2036px;top:894px" width="24" height="22"><path d="M3 12 l5 6 l11 -16" fill="none" stroke="#f5a030" stroke-width="2.6"/></svg>
<svg class="a" style="left:2480px;top:733px" width="61" height="220">
 <path d="M10 11 h10 l-5 6z M43 205 h10 l-5 6z" fill="#111"/>
 <rect x="31" y="0" width="30" height="30" fill="#9c9c9c"/>
 <path d="M46 5 v20 M36 15 h20" stroke="#fff" stroke-width="4"/>
</svg>
<!-- Welds -->
<div class="a tri" style="top:967px"></div>
<div class="a sec" style="top:962px">Welds</div>
<div class="a pl" style="top:998px">Flanges [mm]</div>
<div class="a pl" style="top:1030px">Webs [mm]</div>
<div class="a" style="left:2031px;top:995px;font-size:15.5px;color:#555">10,0</div>
<div class="a" style="left:2031px;top:1027px;font-size:15.5px;color:#555">11,0</div>
<div class="a" style="left:2066px;top:992px;width:29px;height:29px;background:#9c9c9c"></div>
<div class="a" style="left:2066px;top:1025px;width:29px;height:29px;background:#9c9c9c"></div>
<div class="a fld" style="left:2095px;top:992px;width:278px;height:29px;line-height:29px">E70xx</div>
<div class="a fld" style="left:2095px;top:1025px;width:278px;height:29px;line-height:29px">E70xx</div>
<div class="a" style="left:2512px;top:994px;width:27px;height:26px;background:#f97a23"></div>
<div class="a" style="left:2446px;top:1026px;width:26px;height:26px;background:#f97a23"></div>
<svg class="a" style="left:2060px;top:990px" width="481" height="66" viewBox="2060 990 481 66">
<path d="M2075 997 l-3 4 h6z M2075 1016 l-3 -4 h6z M2075 1030 l-3 4 h6z M2075 1049 l-3 -4 h6z" fill="#e6e6e6"/>
<path d="M2357 1003 h10 l-5 6z M2357 1036 h10 l-5 6z" fill="#111"/>
<rect x="2390.0" y="996" width="4.6" height="16" fill="#fff" stroke="#666" stroke-width="1"/>
<path d="M2382.5 1012 L2390.0 1012 L2390.0 1004z " fill="#000"/>
<rect x="2382.0" y="1012" width="20.6" height="5.6" fill="#fff" stroke="#666" stroke-width="1"/>
<rect x="2423.2" y="996" width="4.6" height="16" fill="#fff" stroke="#666" stroke-width="1"/>
<path d="M2427.7999999999997 1012 L2435.2 1012 L2427.7999999999997 1004z " fill="#000"/>
<rect x="2415.2" y="1012" width="20.6" height="5.6" fill="#fff" stroke="#666" stroke-width="1"/>
<rect x="2456.4" y="996" width="4.6" height="16" fill="#fff" stroke="#666" stroke-width="1"/>
<path d="M2448.9 1012 L2456.4 1012 L2456.4 1004z M2461.0 1012 L2468.4 1012 L2461.0 1004z " fill="#000"/>
<rect x="2448.4" y="1012" width="20.6" height="5.6" fill="#fff" stroke="#666" stroke-width="1"/>
<rect x="2489.6" y="996" width="4.6" height="16" fill="#fff" stroke="#666" stroke-width="1"/>
<path d="M2490.1 1012 L2494.2 1012 L2494.2 1006z " fill="#000"/>
<rect x="2481.6" y="1012" width="20.6" height="5.6" fill="#fff" stroke="#666" stroke-width="1"/>
<rect x="2522.8" y="996" width="4.6" height="16" fill="#fff" stroke="#fff" stroke-width="1"/>
<rect x="2514.8" y="1012" width="20.6" height="5.6" fill="#fff" stroke="#c06030" stroke-width="1"/>
<rect x="2390.0" y="1028.5" width="4.6" height="15.5" fill="#fff" stroke="#666" stroke-width="1"/>
<path d="M2382.5 1044 L2390.0 1044 L2390.0 1036z " fill="#000"/>
<rect x="2382.0" y="1044" width="20.6" height="5.6" fill="#fff" stroke="#666" stroke-width="1"/>
<rect x="2423.2" y="1028.5" width="4.6" height="15.5" fill="#fff" stroke="#666" stroke-width="1"/>
<path d="M2427.7999999999997 1044 L2435.2 1044 L2427.7999999999997 1036z " fill="#000"/>
<rect x="2415.2" y="1044" width="20.6" height="5.6" fill="#fff" stroke="#666" stroke-width="1"/>
<rect x="2456.4" y="1028.5" width="4.6" height="15.5" fill="#fff" stroke="#fff" stroke-width="1"/>
<path d="M2448.9 1044 L2456.4 1044 L2456.4 1036z M2461.0 1044 L2468.4 1044 L2461.0 1036z " fill="#000"/>
<rect x="2448.4" y="1044" width="20.6" height="5.6" fill="#fff" stroke="#c06030" stroke-width="1"/>
<rect x="2489.6" y="1028.5" width="4.6" height="15.5" fill="#fff" stroke="#666" stroke-width="1"/>
<path d="M2490.1 1044 L2494.2 1044 L2494.2 1038z " fill="#000"/>
<rect x="2481.6" y="1044" width="20.6" height="5.6" fill="#fff" stroke="#666" stroke-width="1"/>
<rect x="2522.8" y="1028.5" width="4.6" height="15.5" fill="#fff" stroke="#666" stroke-width="1"/>
<rect x="2514.8" y="1044" width="20.6" height="5.6" fill="#fff" stroke="#666" stroke-width="1"/>
</svg>
<svg class="a" style="left:2128px;top:0" width="413" height="227" viewBox="2128 0 413 227">
 <defs>
  <linearGradient id="bg" x1="0" x2="1" y1="0" y2="0"><stop offset="0" stop-color="#e4f2f6"/><stop offset=".45" stop-color="#eef4f4"/><stop offset="1" stop-color="#f2f2f0"/></linearGradient>
  <radialGradient id="face" cx=".42" cy=".3" r=".75"><stop offset="0" stop-color="#f0dccf"/><stop offset=".4" stop-color="#d8b4a0"/><stop offset=".8" stop-color="#b48a74"/><stop offset="1" stop-color="#8a6656"/></radialGradient>
  <linearGradient id="shirt" x1="0" x2="1" y1="0" y2="0"><stop offset="0" stop-color="#b82e3a"/><stop offset=".5" stop-color="#c4363f"/><stop offset="1" stop-color="#b43440"/></linearGradient>
  <filter id="bl" x="-10%" y="-10%" width="120%" height="120%"><feGaussianBlur stdDeviation="1.8"/></filter>
  <filter id="bl2" x="-10%" y="-10%" width="120%" height="120%"><feGaussianBlur stdDeviation="0.9"/></filter>
 </defs>
 <rect x="2128" y="0" width="413" height="227" fill="url(#bg)"/>
 <g filter="url(#bl)">
  <rect x="2128" y="133" width="122" height="3" fill="#c4e4ea"/>
  <path d="M2247 168 l3 -52 q5 -5 9 0 l8 52z" fill="#d4d4d2"/>
  <rect x="2128" y="178" width="15" height="14" fill="#2a2a2a"/>
  <path d="M2162 227 q8 -30 46 -44 q36 -12 70 -24 q50 34 98 -10 q18 4 36 12 q42 18 62 36 q10 14 16 30z" fill="url(#shirt)"/>
  <path d="M2290 148 q-2 34 8 46 q28 14 56 -2 q14 -24 18 -48z" fill="#a47866"/>
  <path d="M2265 62 q0 -64 62 -64 q64 0 64 64 l-2 46 q-8 62 -36 82 q-26 10 -50 -2 q-30 -20 -36 -80z" fill="url(#face)"/>
  <path d="M2261 70 q-6 -78 64 -80 q70 0 70 80 l-12 -2 q-4 -46 -20 -58 q-36 -10 -80 0 q-12 14 -14 60z" fill="#231c18"/>
  <path d="M2385 74 q20 -6 18 24 q-4 24 -18 22z" fill="#c8a08a"/>
  <path d="M2276 150 q10 42 46 46 q34 -4 50 -46 q-4 30 -48 36 q-34 -4 -48 -36z" fill="#4a3428" opacity=".85"/>
  <path d="M2306 166 q16 6 34 0 q-4 18 -16 20 q-14 -2 -18 -20z" fill="#5a4034" opacity=".7"/>
  <path d="M2283 147 q6 -13 22 -18 q10 -3 16 0 q8 -3 18 0 q12 5 14 18 q-14 -7 -32 -6 q-20 -1 -38 6z" fill="#30231c"/>
  <path d="M2298 150 q24 8 46 0 q-4 10 -23 11 q-19 -1 -23 -11z" fill="#b88a84"/>
  <path d="M2264 66 q18 -8 40 -4 M2328 62 q24 -6 48 2" stroke="#2a1f1a" stroke-width="5.5" fill="none"/>
  <ellipse cx="2287" cy="83" rx="9" ry="4.5" fill="#3a4262"/><ellipse cx="2345" cy="80" rx="9" ry="4.5" fill="#3a4262"/>
  <path d="M2310 90 q-3 22 -6 30 q10 6 30 0" stroke="#a07460" stroke-width="2.5" fill="none"/>
 </g>
 <g filter="url(#bl2)" fill="none">
  <path d="M2250 77 q28 -5 54 -3" stroke="#1e1e1e" stroke-width="4"/>
  <path d="M2304 73 q40 -6 84 -2" stroke="#1e1e1e" stroke-width="4"/>
  <path d="M2251 77 q-2 24 10 32 q22 6 40 0 q6 -14 3 -35" stroke="#7a7a7a" stroke-width="1.6"/>
  <path d="M2304 73 q2 26 14 34 q30 6 54 -2 q10 -14 12 -34" stroke="#a8a8a0" stroke-width="1.6"/>
 </g>
 <rect x="2128" y="184" width="117" height="43" fill="#929292" opacity=".85"/>
 <text x="2135" y="213" font-family="Liberation Sans" font-weight="bold" font-size="20.5" fill="#fff" textLength="104">Safak Kurt</text>
</svg>
<div class="a" style="left:2128px;top:227px;width:413px;height:4px;background:#f97a23"></div>

</body></html>
